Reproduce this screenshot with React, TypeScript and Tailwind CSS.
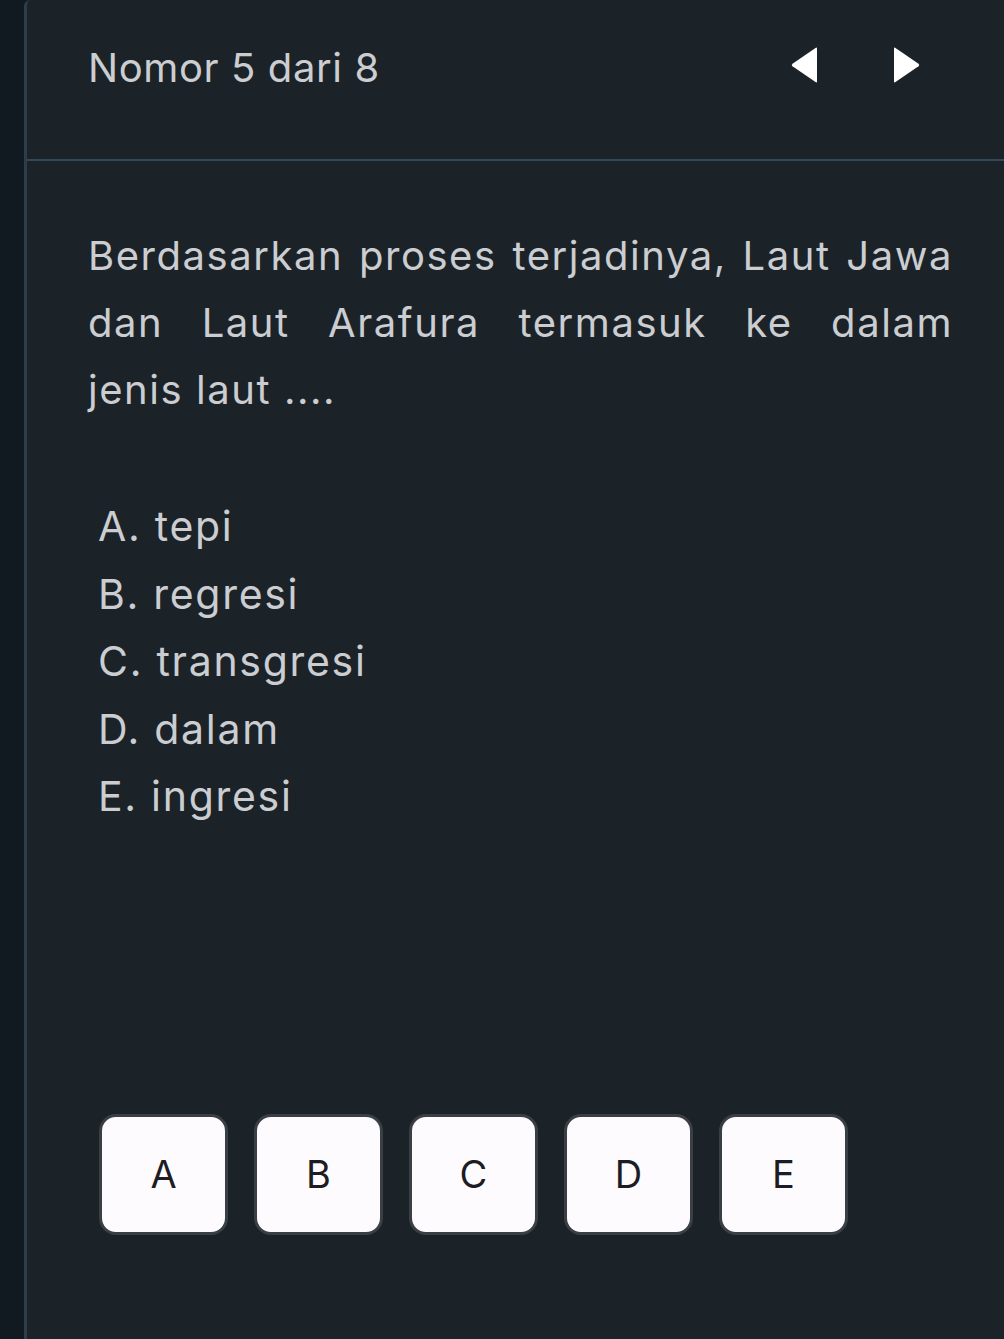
import React from "react";

const options = [
  { k: "A", t: "tepi" },
  { k: "B", t: "regresi" },
  { k: "C", t: "transgresi" },
  { k: "D", t: "dalam" },
  { k: "E", t: "ingresi" },
];

export default function App() {
  return (
    <div
      className="flex w-[1004px] h-[1339px] bg-[#111921] overflow-hidden"
      style={{ fontFamily: "Inter, 'Open Sans', sans-serif" }}
    >
      <div className="w-[24px] shrink-0 bg-[#111921]" />
      <div className="flex-1 flex flex-col bg-[#1b2329] border-l-[3px] border-[#2e3d4a] rounded-tl-[6px]">
        <div className="h-[161px] shrink-0 flex items-start pl-[61px] pr-[84px] pt-[44px] border-b-[2px] border-[#33495a]">
          <div className="text-[40px] leading-[48px] text-[#cbcdd1] tracking-[0.6px]">Nomor 5 dari 8</div>
          <div className="ml-auto flex items-center gap-[75px] pt-[3px]">
            <svg width="27" height="36" viewBox="0 0 27 36">
              <path d="M26 1.5 L26 34.5 Q26 36 24.5 35 L1.5 19.2 Q0 18 1.5 16.8 L24.5 1 Q26 0 26 1.5 Z" fill="#ffffff" />
            </svg>
            <svg width="27" height="36" viewBox="0 0 27 36">
              <path d="M1 1.5 L1 34.5 Q1 36 2.5 35 L25.5 19.2 Q27 18 25.5 16.8 L2.5 1 Q1 0 1 1.5 Z" fill="#ffffff" />
            </svg>
          </div>
        </div>
        <div className="pl-[61px] pr-[51px] pt-[61px]">
          <p className="text-[40px] leading-[67px] text-[#cbcdd1] text-justify tracking-[1.55px]">
            Berdasarkan proses terjadinya, Laut Jawa dan Laut Arafura termasuk ke dalam jenis{"\u00a0"}laut ....
          </p>
          <div className="mt-[70px] pl-[10px] flex flex-col">
            {options.map((o) => (
              <div key={o.k} className="text-[41px] leading-[67.5px] text-[#cbcdd1] tracking-[1.7px]">
                {o.k}. {o.t}
              </div>
            ))}
          </div>
        </div>
        <div className="mt-auto mb-[104px] pl-[72px] flex gap-[26px]">
          {options.map((o) => (
            <div
              key={o.k}
              className="w-[129px] h-[121px] rounded-[17px] bg-[#fdfbfd] border-[3px] border-[#3a3f45] flex items-center justify-center text-[38px] text-[#1c1c22]"
            >
              {o.k}
            </div>
          ))}
        </div>
      </div>
    </div>
  );
}
